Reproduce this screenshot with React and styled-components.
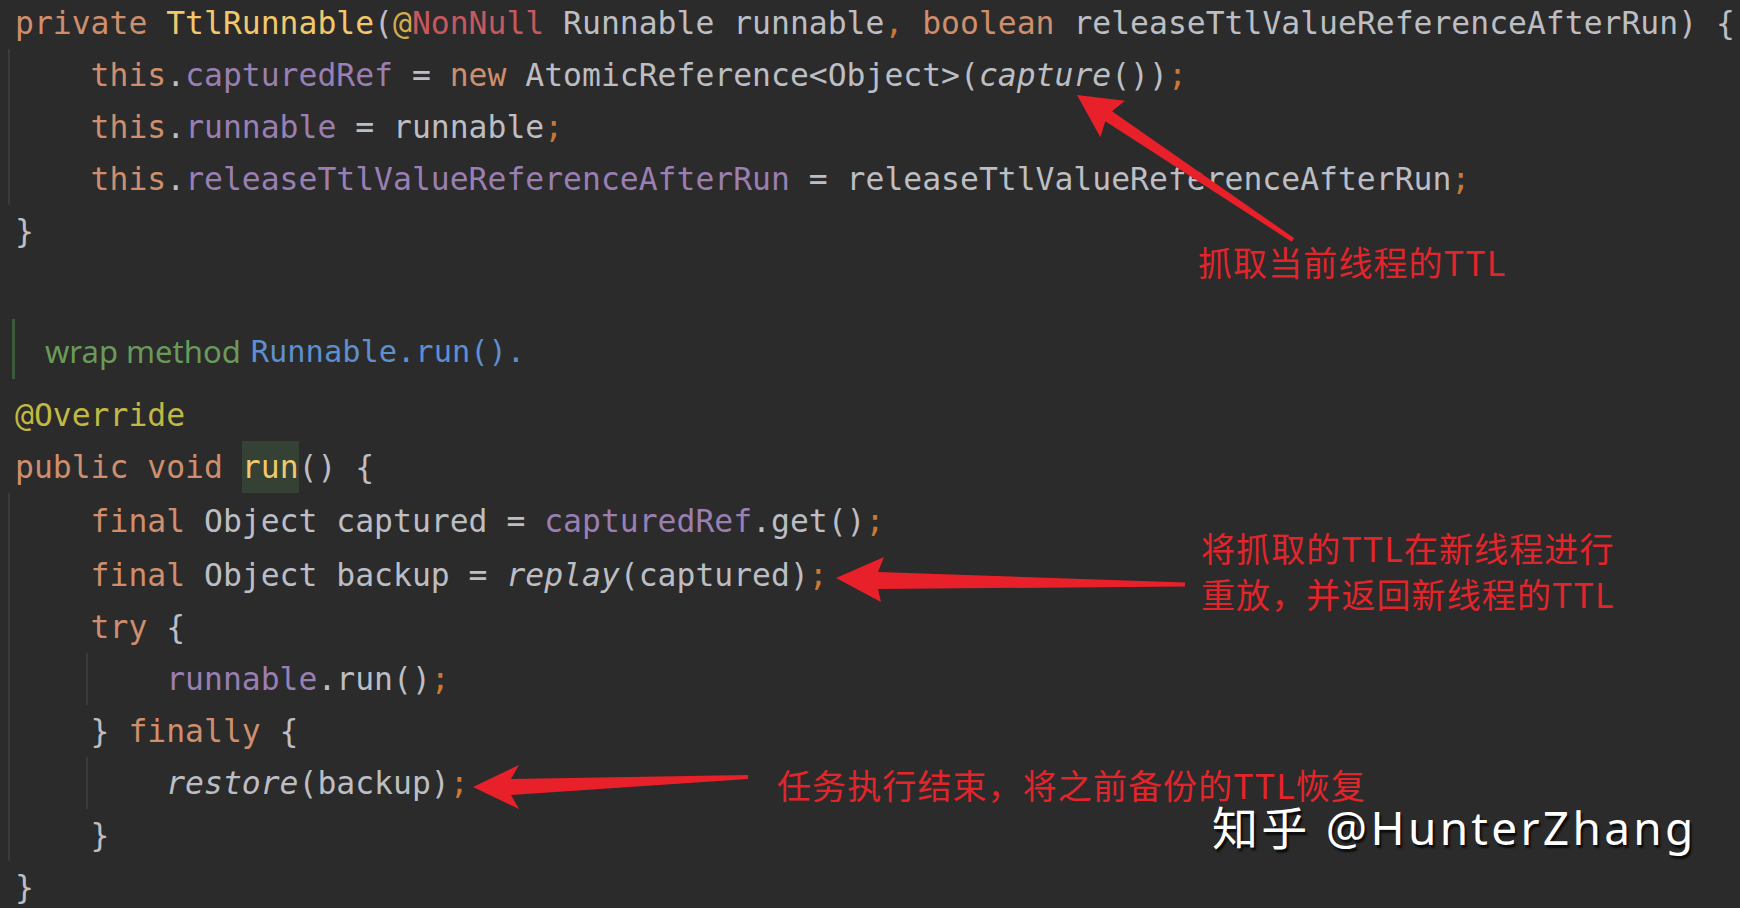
import React from "react";
import styled, { createGlobalStyle } from "styled-components";

const Global = createGlobalStyle`
  html, body { margin: 0; padding: 0; background: #2b2b2b; }
  body { width: 1740px; height: 908px; overflow: hidden; }
`;

const Page = styled.div`
  position: relative;
  width: 1740px;
  height: 908px;
  overflow: hidden;
  background: #2b2b2b;
`;

const CodeArea = styled.div`
  margin-top: -3px;
  display: flex;
  flex-direction: column;
  font-family: "DejaVu Sans Mono", "Liberation Mono", monospace;
  font-size: 31.4px;
  color: #bcbec4;
`;

const Line = styled.div`
  height: ${(p) => p.$h || 52}px;
  line-height: ${(p) => p.$h || 52}px;
  padding-left: 15px;
  white-space: pre;
`;

const Block = styled.div`
  position: relative;
  display: flex;
  flex-direction: column;
  &::before {
    content: "";
    position: absolute;
    left: ${(p) => p.$guide}px;
    top: 0;
    bottom: 0;
    width: 2px;
    background: #3a3a3a;
  }
`;

const Kw = styled.span`color: #cf8e6d;`;
const Field = styled.span`color: #9a7fb3;`;
const Decl = styled.span`color: #f2c86d;`;
const Semi = styled.span`color: #cc7832;`;
const AnnoMark = styled.span`color: #d1ad4e;`;
const NonNullName = styled.span`color: #c7585e;`;
const Override = styled.span`color: #c2b843;`;
const StaticCall = styled.span`font-style: italic;`;
const Highlight = styled.span`
  display: inline-block;
  vertical-align: top;
  height: 52px;
  line-height: 52px;
  background: #344134;
  color: #f2c86d;
`;

const CommentBlock = styled.div`
  height: 80px;
  box-sizing: border-box;
  padding: 10px 0 10px 12px;
`;

const CommentBody = styled.div`
  height: 60px;
  border-left: 3px solid #3d5a3d;
  padding-left: 30px;
  display: flex;
  align-items: center;
  padding-top: 4px;
  box-sizing: border-box;
`;

const CommentText = styled.span`
  font-family: "Noto Sans", "DejaVu Sans", sans-serif;
  font-size: 31px;
  color: #6a9a5a;
`;

const CommentCode = styled.span`
  font-family: "DejaVu Sans Mono", monospace;
  font-size: 30.4px;
  color: #5e8fd0;
  margin-left: 10px;
  white-space: pre;
`;

const Note = styled.div`
  position: absolute;
  left: ${(p) => p.$x}px;
  top: ${(p) => p.$y}px;
  font-family: "Noto Sans CJK SC", "Noto Sans", sans-serif;
  font-size: 34px;
  line-height: 46px;
  letter-spacing: 1.1px;
  color: #e2252b;
  white-space: nowrap;
`;

const Watermark = styled.div`
  position: absolute;
  left: 1212px;
  top: 797px;
  font-family: "Noto Sans", "Noto Sans CJK SC", sans-serif;
  font-size: 46px;
  line-height: 60px;
  letter-spacing: 3.3px;
  color: #ffffff;
  white-space: nowrap;
  text-shadow: 2px 3px 2px rgba(0, 0, 0, 0.75);
`;

const ArrowLayer = styled.svg`
  position: absolute;
  left: 0;
  top: 0;
  pointer-events: none;
`;

const I4 = "    ";
const I8 = "        ";

export default function App() {
  return (
    <Page>
      <Global />
      <CodeArea>
        <Line>
          <Kw>private</Kw>{" "}<Decl>TtlRunnable</Decl>(<AnnoMark>@</AnnoMark><NonNullName>NonNull</NonNullName>{" Runnable runnable"}<Semi>,</Semi>{" "}<Kw>boolean</Kw>{" releaseTtlValueReferenceAfterRun) {"}
        </Line>
        <Block $guide={8}>
          <Line>
            {I4}<Kw>this</Kw>.<Field>capturedRef</Field>{" = "}<Kw>new</Kw>{" AtomicReference<Object>("}<StaticCall>capture</StaticCall>{"())"}<Semi>;</Semi>
          </Line>
          <Line>
            {I4}<Kw>this</Kw>.<Field>runnable</Field>{" = runnable"}<Semi>;</Semi>
          </Line>
          <Line>
            {I4}<Kw>this</Kw>.<Field>releaseTtlValueReferenceAfterRun</Field>{" = releaseTtlValueReferenceAfterRun"}<Semi>;</Semi>
          </Line>
        </Block>
        <Line>{"}"}</Line>
        <Line>{" "}</Line>
        <CommentBlock>
          <CommentBody>
            <CommentText>wrap method</CommentText>
            <CommentCode>Runnable.run().</CommentCode>
          </CommentBody>
        </CommentBlock>
        <Line>
          <Override>@Override</Override>
        </Line>
        <Line>
          <Kw>public</Kw>{" "}<Kw>void</Kw>{" "}<Highlight>run</Highlight>{"() {"}
        </Line>
        <Block $guide={8}>
          <Line $h={56}>
            {I4}<Kw>final</Kw>{" Object captured = "}<Field>capturedRef</Field>{".get()"}<Semi>;</Semi>
          </Line>
          <Line>
            {I4}<Kw>final</Kw>{" Object backup = "}<StaticCall>replay</StaticCall>{"(captured)"}<Semi>;</Semi>
          </Line>
          <Line>
            {I4}<Kw>try</Kw>{" {"}
          </Line>
          <Block $guide={86}>
            <Line>
              {I8}<Field>runnable</Field>{".run()"}<Semi>;</Semi>
            </Line>
          </Block>
          <Line>
            {I4}{"} "}<Kw>finally</Kw>{" {"}
          </Line>
          <Block $guide={86}>
            <Line>
              {I8}<StaticCall>restore</StaticCall>{"(backup)"}<Semi>;</Semi>
            </Line>
          </Block>
          <Line>
            {I4}{"}"}
          </Line>
        </Block>
        <Line>{"}"}</Line>
      </CodeArea>

      <ArrowLayer width="1740" height="908" viewBox="0 0 1740 908">
        <polygon
          fill="#e8202a"
          points="1077,95 1125,100.7 1112,111.2 1294.3,238.3 1291.7,241.7 1105.3,121.2 1100.4,137.3"
        />
        <polygon
          fill="#e8202a"
          points="836,578 884,557 878,572 1185,582.5 1185,586.5 878,589 881,602"
        />
        <polygon
          fill="#e8202a"
          points="473,787 519,765 511,779 748,775 748,779 511,795 519,809"
        />
      </ArrowLayer>

      <Note $x={1198} $y={239}>抓取当前线程的TTL</Note>
      <Note $x={1201} $y={525}>
        将抓取的TTL在新线程进行
        <br />
        重放，并返回新线程的TTL
      </Note>
      <Note $x={777} $y={762}>任务执行结束，将之前备份的TTL恢复</Note>
      <Watermark>知乎 @HunterZhang</Watermark>
    </Page>
  );
}
